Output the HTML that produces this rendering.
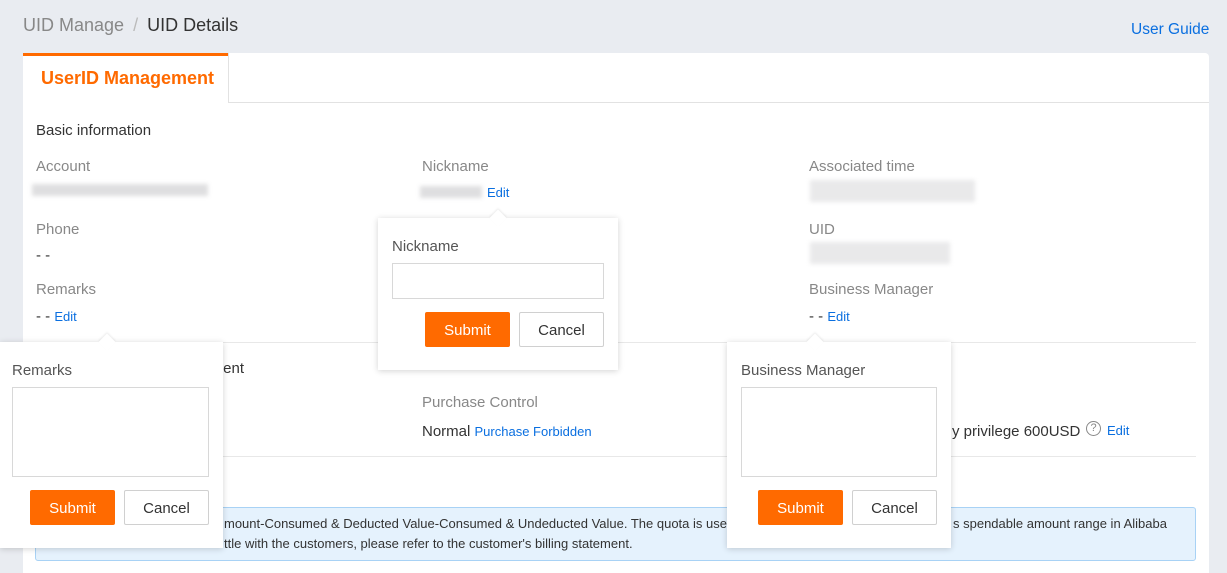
<!DOCTYPE html>
<html><head><meta charset="utf-8"><style>
*{box-sizing:border-box;margin:0;padding:0}
body{width:1227px;height:568px;background:#e9ecf1;font-family:"Liberation Sans",Arial,sans-serif;position:relative;overflow:hidden;color:#333}
.a{position:absolute;white-space:nowrap}
.lbl{font-size:15px;color:#888}
.val{font-size:15px;color:#333}
.edit{font-size:13px;color:#0a6fe0}
.blur{position:absolute;background:#c9c9cc;filter:blur(2px);opacity:.8}
.pop{position:absolute;background:#fff;box-shadow:0 1px 6px rgba(0,0,0,.18);}
.pop .arrow{position:absolute;top:-6px;width:12px;height:12px;background:#fff;transform:rotate(45deg);box-shadow:-1px -1px 2px rgba(0,0,0,.08)}
.inp{position:absolute;border:1px solid #d8d8d8;background:#fff}
.sub{position:absolute;background:#ff6a00;color:#fff;font-size:15px;text-align:center;height:35px;line-height:37px;width:85px;border-radius:2px}
.can{position:absolute;background:#fff;color:#333;font-size:15px;text-align:center;height:35px;line-height:35px;width:85px;border:1px solid #d0d0d0;border-radius:2px}
.info{font-size:13px;color:#333}
</style></head><body>
<div class="a" style="left:23px;top:15px;font-size:18px;color:#888">UID Manage <span style="color:#bbb;margin:0 4px">/</span> <span style="color:#333">UID Details</span></div>
<div class="a" style="left:1131px;top:21px;font-size:15.5px;color:#0a6fe0">User Guide</div>

<div class="a" style="left:23px;top:53px;width:1186px;height:520px;background:#fff;border-radius:4px 4px 0 0"></div>
<div class="a" style="left:229px;top:102px;width:980px;height:1px;background:#e2e2e2"></div>
<div class="a" style="left:23px;top:53px;width:206px;height:3px;background:#ff6a00"></div>
<div class="a" style="left:228px;top:53px;width:1px;height:50px;background:#e2e2e2"></div>
<div class="a" style="left:41px;top:68px;font-size:18px;font-weight:bold;color:#ff6a00">UserID Management</div>

<div class="a val" style="left:36px;top:122px">Basic information</div>
<div class="a lbl" style="left:36px;top:158px">Account</div>
<div class="blur" style="left:32px;top:184px;width:176px;height:12px;opacity:.6"></div>
<div class="a lbl" style="left:422px;top:158px">Nickname</div>
<div class="blur" style="left:420px;top:186px;width:62px;height:12px;opacity:.6"></div>
<div class="a edit" style="left:487px;top:185px">Edit</div>
<div class="a lbl" style="left:809px;top:158px">Associated time</div>
<div class="blur" style="left:810px;top:180px;width:165px;height:22px;opacity:.4"></div>
<div class="a lbl" style="left:36px;top:221px">Phone</div>
<div class="a val" style="left:36px;top:247px">- -</div>
<div class="a lbl" style="left:809px;top:221px">UID</div>
<div class="blur" style="left:810px;top:242px;width:140px;height:22px;opacity:.4"></div>
<div class="a lbl" style="left:36px;top:281px">Remarks</div>
<div class="a val" style="left:36px;top:308px">- - <span class="edit">Edit</span></div>
<div class="a lbl" style="left:809px;top:281px">Business Manager</div>
<div class="a val" style="left:809px;top:308px">- - <span class="edit">Edit</span></div>

<div class="a" style="left:36px;top:342px;width:1160px;height:1px;background:#e8e8e8"></div>
<div class="a val" style="left:150px;top:360px;width:94px;text-align:right;overflow:hidden;direction:rtl">Quota Management</div>
<div class="a lbl" style="left:422px;top:394px">Purchase Control</div>
<div class="a val" style="left:422px;top:423px">Normal <span class="edit">Purchase Forbidden</span></div>
<div class="a val" style="left:952px;top:423px">y privilege 600USD</div>
<div class="a" style="left:1086px;top:421px;width:15px;height:15px;border:1px solid #888;border-radius:50%;font-size:11px;color:#888;text-align:center;line-height:13px">?</div>
<div class="a edit" style="left:1107px;top:423px">Edit</div>
<div class="a" style="left:36px;top:456px;width:1160px;height:1px;background:#e8e8e8"></div>

<div class="a" style="left:35px;top:507px;width:1161px;height:54px;background:#e5f2fd;border:1px solid #a8d2f5;border-radius:3px"></div>
<div class="a info" style="left:224px;top:516px">mount-Consumed &amp; Deducted Value-Consumed &amp; Undeducted Value. The quota is used</div>
<div class="a info" style="left:953px;top:516px">s spendable amount range in Alibaba</div>
<div class="a info" style="left:224px;top:536px">ttle with the customers, please refer to the customer's billing statement.</div>

<div class="pop" style="left:378px;top:218px;width:240px;height:152px">
<div class="arrow" style="left:114px"></div>
<div class="a lbl" style="left:14px;top:20px;color:#555">Nickname</div>
<div class="inp" style="left:14px;top:45px;width:212px;height:36px"></div>
<div class="sub" style="left:47px;top:94px">Submit</div>
<div class="can" style="left:141px;top:94px">Cancel</div>
</div>

<div class="pop" style="left:0;top:342px;width:223px;height:206px">
<div class="arrow" style="left:101px"></div>
<div class="a lbl" style="left:12px;top:20px;color:#555">Remarks</div>
<div class="inp" style="left:12px;top:45px;width:197px;height:90px"></div>
<div class="sub" style="left:30px;top:148px;width:85px">Submit</div>
<div class="can" style="left:124px;top:148px">Cancel</div>
</div>

<div class="pop" style="left:727px;top:342px;width:224px;height:206px">
<div class="arrow" style="left:82px"></div>
<div class="a lbl" style="left:14px;top:20px;color:#555">Business Manager</div>
<div class="inp" style="left:14px;top:45px;width:196px;height:90px"></div>
<div class="sub" style="left:31px;top:148px">Submit</div>
<div class="can" style="left:125px;top:148px">Cancel</div>
</div>
</body></html>
